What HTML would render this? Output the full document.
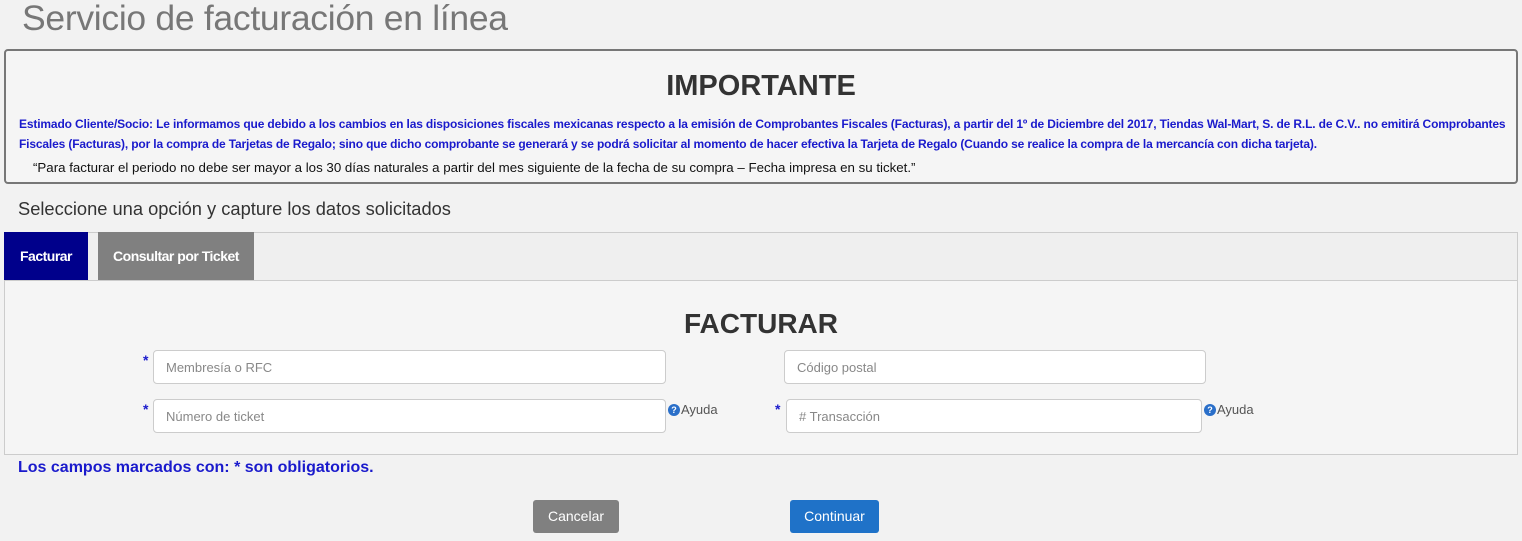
<!DOCTYPE html>
<html><head><meta charset="utf-8"><style>
body{margin:0;width:1522px;height:541px;background:#f2f2f2;font-family:"Liberation Sans",sans-serif;position:relative;overflow:hidden}
.a{position:absolute;white-space:nowrap}
.inp{position:absolute;background:#fff;border:1px solid #ccc;border-radius:4px;box-sizing:border-box;height:34px;font-size:13px;color:#888;padding:9px 12px}
.st{position:absolute;color:#1a1acc;font-size:14px;font-weight:bold}
.ay{position:absolute;font-size:13px;color:#555}
.ay i{display:inline-block;width:12px;height:12px;border-radius:50%;background:#2a6fc9;color:#fff;font-size:9px;font-style:normal;font-weight:bold;text-align:center;line-height:12px;vertical-align:1px;margin-right:1px}
.btn{position:absolute;color:#fff;font-size:14px;text-align:center;line-height:33px;height:33px;border-radius:3px}
</style></head><body>
<div class="a" style="left:22px;top:-2px;font-size:35.5px;color:#777;letter-spacing:-0.3px">Servicio de facturación en línea</div>
<div class="a" style="left:4px;top:49px;width:1514px;height:135px;box-sizing:border-box;border:2px solid #777;border-radius:4px;background:#f5f5f5"></div>
<div class="a" style="left:0;width:1522px;text-align:center;top:70px;font-size:29px;font-weight:bold;color:#333">IMPORTANTE</div>
<div class="a" style="left:19px;top:114px;font-size:12px;line-height:20px;color:#1a1acc;font-weight:bold;letter-spacing:-0.15px">Estimado Cliente/Socio: Le informamos que debido a los cambios en las disposiciones fiscales mexicanas respecto a la emisión de Comprobantes Fiscales (Facturas), a partir del 1º de Diciembre del 2017, Tiendas Wal-Mart, S. de R.L. de C.V.. no emitirá Comprobantes<br>Fiscales (Facturas), por la compra de Tarjetas de Regalo; sino que dicho comprobante se generará y se podrá solicitar al momento de hacer efectiva la Tarjeta de Regalo (Cuando se realice la compra de la mercancía con dicha tarjeta).</div>
<div class="a" style="left:33px;top:160px;font-size:13.3px;color:#111">“Para facturar el periodo no debe ser mayor a los 30 días naturales a partir del mes siguiente de la fecha de su compra – Fecha impresa en su ticket.”</div>
<div class="a" style="left:18px;top:198px;font-size:18.3px;color:#333">Seleccione una opción y capture los datos solicitados</div>
<div class="a" style="left:4px;top:232px;width:1514px;height:223px;box-sizing:border-box;border:1px solid #ccc;background:#f5f5f5"></div>
<div class="a" style="left:5px;top:233px;width:1512px;height:47px;background:#efefef;border-bottom:1px solid #ccc"></div>
<div class="a" style="left:4px;top:232px;width:84px;height:48px;background:#00008b;color:#fff;font-weight:bold;font-size:14px;line-height:48px;text-align:center;letter-spacing:-0.5px">Facturar</div>
<div class="a" style="left:98px;top:232px;width:156px;height:48px;background:#808080;color:#fff;font-weight:bold;font-size:14px;line-height:48px;text-align:center;letter-spacing:-0.5px">Consultar por Ticket</div>
<div class="a" style="left:0;width:1522px;text-align:center;top:308px;font-size:28px;font-weight:bold;color:#333">FACTURAR</div>
<span class="st" style="left:143px;top:352px">*</span>
<div class="inp" style="left:153px;top:350px;width:513px">Membresía o RFC</div>
<div class="inp" style="left:784px;top:350px;width:422px">Código postal</div>
<span class="st" style="left:143px;top:401px">*</span>
<div class="inp" style="left:153px;top:399px;width:513px">Número de ticket</div>
<div class="ay" style="left:668px;top:402px"><i>?</i>Ayuda</div>
<span class="st" style="left:775px;top:401px">*</span>
<div class="inp" style="left:786px;top:399px;width:416px"># Transacción</div>
<div class="ay" style="left:1204px;top:402px"><i>?</i>Ayuda</div>
<div class="a" style="left:18px;top:459px;font-size:16px;font-weight:bold;color:#1a1acc">Los campos marcados con: * son obligatorios.</div>
<div class="btn" style="left:533px;top:500px;width:86px;background:#808080">Cancelar</div>
<div class="btn" style="left:790px;top:500px;width:89px;background:#1f72c8">Continuar</div>
</body></html>
